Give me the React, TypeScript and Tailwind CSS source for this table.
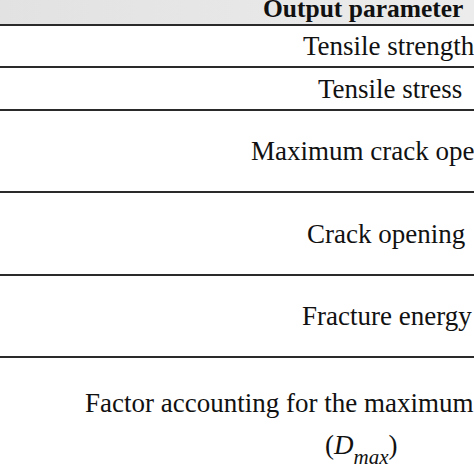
const rows = [
  { label: 'Tensile strength', pad: 'pl-[303px]', h: 'h-[40px]' },
  { label: 'Tensile stress', pad: 'pl-[318px]', h: 'h-[41px]' },
  { label: 'Maximum crack opening', pad: 'pl-[251px]', h: 'h-[80px]' },
  { label: 'Crack opening', pad: 'pl-[307px]', h: 'h-[81px]' },
  { label: 'Fracture energy', pad: 'pl-[302px]', h: 'h-[80px]' },
]

export default function App() {
  return (
    <div className="h-[474px] w-[474px] overflow-hidden bg-white font-['Liberation_Serif',serif] text-[27px] text-[#111]">
      <div className="flex h-[26px] items-start border-b-2 border-[#2a2a2a] bg-gradient-to-r from-[#e2e2e2] to-[#ececec]">
        <span className="-mt-[3px] whitespace-nowrap pl-[263px] text-[25.5px] font-bold leading-[24px]">
          Output parameter
        </span>
      </div>

      {rows.map((row) => (
        <div
          key={row.label}
          className={`flex ${row.h} box-content items-center border-b-2 border-[#2a2a2a]`}
        >
          <span className={`whitespace-nowrap ${row.pad} leading-[30px]`}>{row.label}</span>
        </div>
      ))}

      <div className="flex flex-col pt-[24px] leading-[42px]">
        <span className="whitespace-nowrap pl-[85px]">
          Factor accounting for the maximum aggregate size
        </span>
        <span className="whitespace-nowrap pl-[325px]">
          (<i>D</i>
          <sub className="align-[-5px] text-[21px] italic leading-none">max</sub>)
        </span>
      </div>
    </div>
  )
}
